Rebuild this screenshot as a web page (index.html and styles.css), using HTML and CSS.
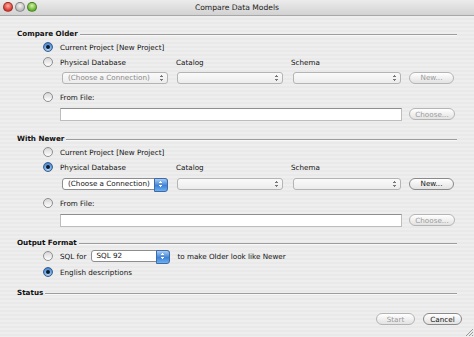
FILE: index.html
```html
<!DOCTYPE html>
<html lang="en">
<head>
  <meta charset="UTF-8" />
  <title>Compare Data Models</title>
  <link rel="stylesheet" href="styles.css">
</head>
<body>

  <div class="window">
    <header class="titlebar">
      <div class="lights">
        <span class="light red"></span>
        <span class="light gray"></span>
        <span class="light green"></span>
      </div>
      <span class="title">Compare Data Models</span>
    </header>

    <main class="content">

      <!-- Compare Older -->
      <div class="heading sec-older"><span>Compare Older</span><i></i></div>
      <div class="row r-first"><span class="radio on"></span>Current Project [New Project]</div>
      <div class="row r-db">
        <span class="radio"></span>
        <div class="cols">
          <span>Physical Database</span>
          <span>Catalog</span>
          <span>Schema</span>
        </div>
      </div>
      <div class="selects s-older">
        <span class="select sel-conn off">(Choose a Connection)</span>
        <span class="select sel-cat off"></span>
        <span class="select sel-schema off"></span>
        <span class="btn off">New...</span>
      </div>
      <div class="row r-file"><span class="radio"></span>From File:</div>
      <div class="filerow f-older">
        <span class="field"></span>
        <span class="btn wide off">Choose...</span>
      </div>

      <!-- With Newer -->
      <div class="heading sec-newer"><span>With Newer</span><i></i></div>
      <div class="row r-first"><span class="radio"></span>Current Project [New Project]</div>
      <div class="row r-db">
        <span class="radio on"></span>
        <div class="cols">
          <span>Physical Database</span>
          <span>Catalog</span>
          <span>Schema</span>
        </div>
      </div>
      <div class="selects s-newer">
        <span class="select sel-conn active">(Choose a Connection)</span>
        <span class="select sel-cat off"></span>
        <span class="select sel-schema off"></span>
        <span class="btn">New...</span>
      </div>
      <div class="row r-file"><span class="radio"></span>From File:</div>
      <div class="filerow f-newer">
        <span class="field"></span>
        <span class="btn wide off">Choose...</span>
      </div>

      <!-- Output Format -->
      <div class="heading sec-output"><span>Output Format</span><i></i></div>
      <div class="row r-sql">
        <span class="radio"></span>SQL for
        <span class="select sel-sql active">SQL 92</span>
        <span class="sql-note">to make Older look like Newer</span>
      </div>
      <div class="row r-eng"><span class="radio on"></span>English descriptions</div>

      <div class="heading sec-status"><span>Status</span><i></i></div>

      <div class="actions">
        <span class="btn off">Start</span>
        <span class="btn">Cancel</span>
      </div>
    </main>

    <svg class="grip" width="9" height="9" viewBox="0 0 9 9">
      <path d="M8 1 L1 8 M8 4 L4 8 M8 7 L7 8" stroke="#999" stroke-width="1" fill="none" />
    </svg>
  </div>

</body>
</html>
```

FILE: styles.css
```css
* {
  box-sizing: border-box;
}

html, body {
  margin: 0;
  padding: 0;
}

body {
  font-family: 'DejaVu Sans', sans-serif;
  font-size: 7.2px;
  color: #111;
  width: 474px;
  height: 337px;
  overflow: hidden;
}

.window {
  position: relative;
  height: 337px;
  background: repeating-linear-gradient(to bottom, #eeeeee 0, #eeeeee 2px, #e9e9e9 2px, #e9e9e9 4px);
}

.titlebar {
  height: 16px;
  background: linear-gradient(#ececec, #d2d2d2);
  border-bottom: 1px solid #a8a8a8;
  display: flex;
  align-items: center;
  justify-content: center;
  position: relative;
}

.title {
  font-size: 7.6px;
  color: #222;
}

.lights {
  position: absolute;
  left: 3px;
  top: 2px;
  display: flex;
  gap: 2px;
}

.light {
  width: 10px;
  height: 10px;
  border-radius: 50%;
  border: 1px solid rgba(0, 0, 0, 0.3);
}

.red {
  background: radial-gradient(circle at 50% 35%, #ffb0a8, #d8352c 70%);
}

.gray {
  background: radial-gradient(circle at 50% 35%, #f4f4f4, #b5b5b5 75%);
}

.green {
  background: radial-gradient(circle at 50% 35%, #d8f5a6, #5fae2c 70%);
}

.content {
  padding: 0 17px;
}

/* section headings with rule */
.heading {
  display: flex;
  align-items: center;
  height: 14px;
  font-weight: bold;
}

.heading i {
  flex: 1;
  height: 0;
  margin: 3px 0 0 2px;
  border-top: 1px solid #9d9d9d;
  border-bottom: 1px solid #f8f8f8;
}

.sec-older { margin-top: 10px; }
.sec-newer { margin-top: 11px; height: 13px; }
.sec-output { margin-top: 8px; }
.sec-status { margin-top: 6px; }

/* radio rows */
.row {
  display: flex;
  align-items: center;
  height: 14px;
  padding-left: 26px;
}

.r-db { margin-top: 1px; }
.r-file { margin-top: 6px; }
.r-eng { margin-top: 2px; }

.radio {
  width: 10px;
  height: 10px;
  border-radius: 50%;
  border: 1px solid #8e8e8e;
  background: linear-gradient(#d6d6d6, #ffffff);
  margin-right: 7px;
  flex: none;
  display: flex;
  align-items: center;
  justify-content: center;
}

.radio.on {
  border-color: #3a5e92;
  background: radial-gradient(circle at 50% 70%, #c9e4fb, #5b98d8 60%, #2f66ad);
}

.radio.on::after {
  content: '';
  width: 4px;
  height: 4px;
  border-radius: 50%;
  background: #0d1a2c;
}

.cols {
  display: grid;
  grid-template-columns: 116px 115px auto;
}

/* popup menus */
.selects {
  display: flex;
  align-items: center;
  height: 13px;
  margin-top: 2px;
  padding-left: 45px;
}

.s-newer { margin-top: 3px; }

.select {
  position: relative;
  height: 12px;
  border: 1px solid #b4b4b4;
  border-radius: 3px;
  background: linear-gradient(#fafafa, #ececec);
  padding: 0 0 0 5px;
  line-height: 10px;
  white-space: nowrap;
}

.select::after {
  content: '';
  position: absolute;
  right: 4px;
  top: 2px;
  width: 3px;
  height: 6px;
  background:
    linear-gradient(#777, #777) 1px 0 / 1px 1px no-repeat,
    linear-gradient(#777, #777) 0 1px / 3px 1px no-repeat,
    linear-gradient(#777, #777) 0 4px / 3px 1px no-repeat,
    linear-gradient(#777, #777) 1px 5px / 1px 1px no-repeat;
}

.select.off {
  color: #8a8a8a;
}

.select.active {
  background: #fff;
  border-color: #8d8d8d;
  color: #111;
}

.select.active::after {
  right: -1px;
  top: -1px;
  width: 12px;
  height: 12px;
  border-radius: 0 3px 3px 0;
  border: 1px solid #3f6aa6;
  background:
    linear-gradient(#fff, #fff) 5px 2px / 1px 1px no-repeat,
    linear-gradient(#fff, #fff) 4px 3px / 3px 1px no-repeat,
    linear-gradient(#fff, #fff) 4px 6px / 3px 1px no-repeat,
    linear-gradient(#fff, #fff) 5px 7px / 1px 1px no-repeat,
    linear-gradient(#a8cdf3, #3d82d8 55%, #6fb0ef);
}

.sel-conn { width: 106px; }
.sel-cat { width: 106px; margin-left: 9px; }
.sel-schema { width: 108px; margin-left: 10px; }

/* push buttons */
.btn {
  display: inline-flex;
  align-items: center;
  justify-content: center;
  height: 12px;
  width: 45px;
  border: 1px solid #8a8a8a;
  border-radius: 7px;
  background: linear-gradient(#ffffff, #e2e2e2);
  flex: none;
}

.btn.off {
  color: #9a9a9a;
  border-color: #b5b5b5;
}

.selects .btn { margin-left: 8px; }

.btn.wide { width: 46px; }

/* file path rows */
.filerow {
  display: flex;
  align-items: center;
  height: 14px;
  margin-top: 3px;
  padding-left: 43px;
}

.field {
  width: 342px;
  height: 13px;
  background: #fff;
  border: 1px solid #bdbdbd;
  border-top-color: #8e8e8e;
}

.filerow .btn { margin-left: 7px; }

/* output format */
.sel-sql {
  width: 79px;
  margin-left: 5px;
  padding-left: 4px;
}

.sql-note {
  margin-left: 7px;
}

.actions {
  display: flex;
  justify-content: flex-end;
  gap: 8px;
  margin: 14px -5px 0 0;
}

.actions .btn { width: 39px; }

.grip {
  position: absolute;
  right: 0;
  bottom: 0;
}
```
